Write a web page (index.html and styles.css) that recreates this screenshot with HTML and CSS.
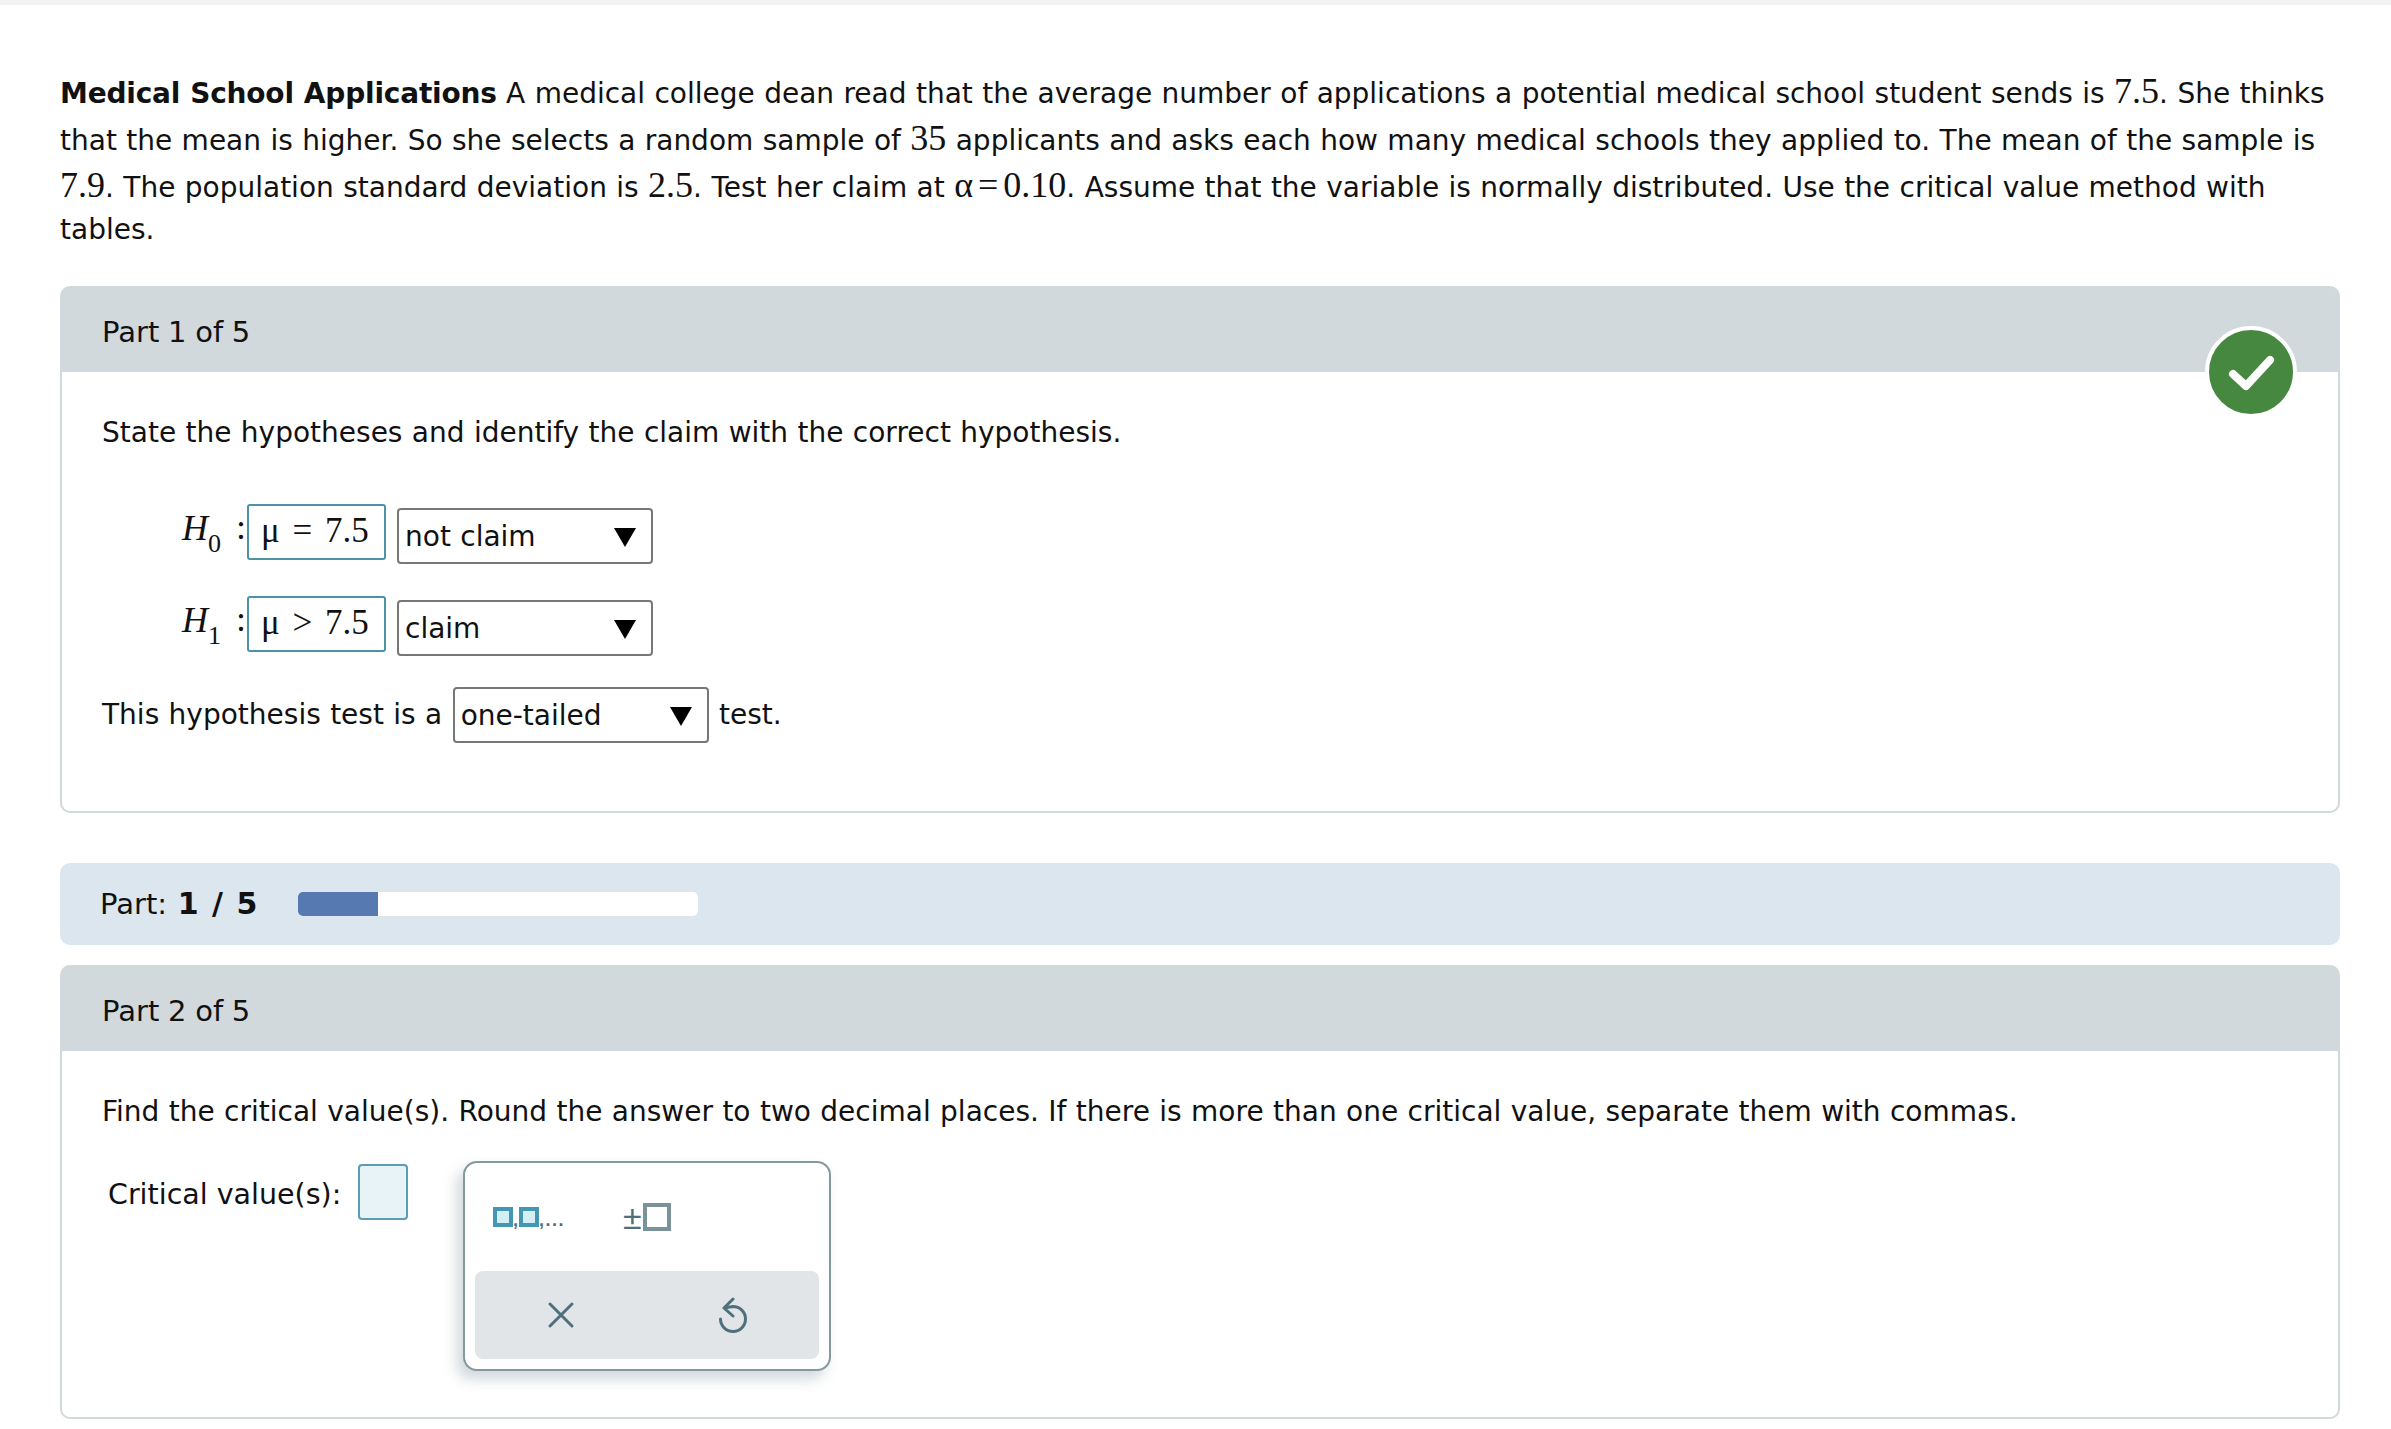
FILE: index.html
```html
<!DOCTYPE html>
<html lang="en">

<head>
    <meta charset="UTF-8">
    <title>Medical School Applications</title>
    <link rel="stylesheet" href="styles.css">
</head>

<body>
    <div class="topbar"></div>
    <main>
        <p class="question"><b>Medical School Applications</b> A medical college dean read that the average number of applications a potential medical school student sends is <span class="num">7.5</span>. She thinks that the mean is higher. So she selects a random sample of <span class="num">35</span> applicants and asks each how many medical schools they applied to. The mean of the sample is <span class="num">7.9</span>. The population standard deviation is <span class="num">2.5</span>. Test her claim at <span class="num">α<span class="eq">=</span>0.10</span>. Assume that the variable is normally distributed. Use the critical value method with tables.</p>

        <section class="part part-first">
            <div class="part-head">Part 1 of 5</div>
            <div class="badge">
                <svg viewBox="0 0 92 92" width="92" height="92">
                    <circle cx="46" cy="46" r="44" fill="#478840" stroke="#fff" stroke-width="4"/>
                    <path d="M28 48 L41 60 L65 34" fill="none" stroke="#fff" stroke-width="8" stroke-linecap="round" stroke-linejoin="round"/>
                </svg>
            </div>
            <div class="part-body">
                <p class="prompt">State the hypotheses and identify the claim with the correct hypothesis.</p>
                <div class="hyp">
                    <span class="hyp-name"><i>H</i><sub>0</sub></span>
                    <span class="colon">:</span>
                    <span class="answer">μ = 7.5</span>
                    <span class="select">not claim<span class="arrow"></span></span>
                </div>
                <div class="hyp">
                    <span class="hyp-name"><i>H</i><sub>1</sub></span>
                    <span class="colon">:</span>
                    <span class="answer">μ &gt; 7.5</span>
                    <span class="select">claim<span class="arrow"></span></span>
                </div>
                <div class="tail">
                    This hypothesis test is a
                    <span class="select">one-tailed<span class="arrow"></span></span>
                    test.
                </div>
            </div>
        </section>

        <div class="progress">
            <span class="progress-label">Part: <b>1 / 5</b></span>
            <div class="bar"><div class="bar-fill"></div></div>
        </div>

        <section class="part">
            <div class="part-head">Part 2 of 5</div>
            <div class="part-body">
                <p class="prompt">Find the critical value(s). Round the answer to two decimal places. If there is more than one critical value, separate them with commas.</p>
                <div class="critical">
                    <span class="critical-label">Critical value(s):</span>
                    <span class="blank"></span>
                    <div class="keypad">
                        <div class="keys">
                            <span class="key-list"><span class="sq"></span><span class="sep">,</span><span class="sq"></span><span class="sep">,...</span></span>
                            <span class="key-sign"><span class="pm">±</span><span class="sq-big"></span></span>
                        </div>
                        <div class="actions">
                            <svg viewBox="0 0 28 28" width="28" height="28">
                                <path d="M3 3 L25 25 M25 3 L3 25" fill="none" stroke="#4f6f7c" stroke-width="3" stroke-linecap="round"/>
                            </svg>
                            <svg viewBox="0 0 30 36" width="30" height="36">
                                <path d="M6 11 L15 9.5 A12.5 12.5 0 1 1 2.5 22 M15 2 L6 11 L15 19" fill="none" stroke="#4f6f7c" stroke-width="3" stroke-linecap="round" stroke-linejoin="round"/>
                            </svg>
                        </div>
                    </div>
                </div>
            </div>
        </section>
    </main>
</body>

</html>
```
FILE: styles.css
```css
* {
    box-sizing: border-box;
    margin: 0;
    padding: 0;
}

body {
    font-family: "DejaVu Sans", Verdana, sans-serif;
    font-size: 28px;
    word-spacing: 0.5px;
    color: #111;
    background: #fff;
}

.topbar {
    height: 5px;
    background: #f0f2f4;
}

main {
    padding: 0 51px 0 60px;
}

.question {
    margin-top: 63px;
    line-height: 42px;
}

.question b {
    letter-spacing: -0.2px;
}

.num {
    font-family: "Liberation Serif", serif;
    font-size: 36px;
    line-height: 47px;
}

.eq {
    margin: 0 5px;
}

.part {
    position: relative;
    border: 2px solid #d2d9dc;
    border-radius: 10px;
}

.part-first {
    margin-top: 35px;
    height: 527px;
}

.part-head {
    height: 85px;
    margin: -1px -1px 0;
    padding: 24px 0 0 41px;
    font-size: 29px;
    word-spacing: -0.5px;
    line-height: 42px;
    background: #d2d9dc;
    border-radius: 10px 10px 0 0;
}

.badge {
    position: absolute;
    top: 38px;
    right: 41px;
    width: 92px;
    height: 92px;
}

.part-body {
    padding: 40px 0 0 40px;
}

.prompt {
    line-height: 42px;
}

.hyp {
    display: flex;
    align-items: flex-start;
    margin-left: 79px;
    height: 92px;
}

.prompt + .hyp {
    margin-top: 50px;
}

.hyp-name {
    width: 54px;
    margin-left: 1px;
    font-family: "Liberation Serif", serif;
    font-size: 36px;
    line-height: 48px;
}

.hyp-name sub {
    font-size: 26px;
    line-height: 0;
    vertical-align: -12px;
}

.colon {
    width: 11px;
    font-family: "Liberation Serif", serif;
    font-size: 36px;
    line-height: 46px;
}

.answer {
    width: 139px;
    height: 56px;
    padding-left: 12px;
    border: 2px solid #4c93a8;
    border-radius: 3px;
    font-family: "Liberation Serif", serif;
    font-size: 35px;
    word-spacing: 4px;
    line-height: 50px;
}

.select {
    position: relative;
    display: inline-block;
    width: 256px;
    height: 56px;
    margin: 4px 0 0 11px;
    padding-left: 6px;
    border: 2px solid #777;
    border-radius: 4px;
    line-height: 54px;
    vertical-align: top;
}

.arrow {
    position: absolute;
    top: 18px;
    right: 15px;
    border-left: 11px solid transparent;
    border-right: 11px solid transparent;
    border-top: 19px solid #000;
}

.tail {
    line-height: 56px;
    margin-top: -1px;
    height: 60px;
}

.tail .select {
    margin: 0 1px 0 1px;
}

.progress {
    display: flex;
    align-items: center;
    height: 82px;
    margin-top: 50px;
    padding-left: 40px;
    background: #dce6ef;
    border-radius: 10px;
}

.progress-label {
    width: 198px;
    font-size: 29px;
    word-spacing: 1.5px;
    line-height: 42px;
}

.progress-label b {
    font-size: 30px;
    word-spacing: 3px;
}

.bar {
    width: 400px;
    height: 24px;
    background: #fff;
    border-radius: 5px;
    overflow: hidden;
}

.bar-fill {
    width: 80px;
    height: 100%;
    background: #5579b0;
}

.progress + .part {
    margin-top: 20px;
    height: 454px;
}

.critical {
    display: flex;
    align-items: flex-start;
    margin-top: 28px;
    padding-left: 6px;
}

.critical-label {
    width: 250px;
    margin-top: 13px;
    font-size: 28.5px;
    word-spacing: 0;
    line-height: 42px;
}

.blank {
    width: 50px;
    height: 56px;
    margin-top: 3px;
    background: #e8f3f8;
    border: 2px solid #5b9db2;
    border-radius: 4px;
}

.keypad {
    width: 368px;
    height: 210px;
    margin-left: 55px;
    padding: 0 10px;
    background: #fff;
    border: 2px solid #83999f;
    border-radius: 14px;
    box-shadow: -6px 8px 14px rgba(70, 100, 110, 0.25);
}

.keys {
    display: flex;
    align-items: center;
    height: 108px;
    padding-left: 18px;
    color: #4f6f7c;
}

.key-list {
    display: flex;
    align-items: flex-end;
    width: 130px;
}

.sq {
    width: 20px;
    height: 20px;
    background: #d5eef4;
    border: 4px solid #4297b5;
}

.sep {
    width: 6px;
    font-family: "Liberation Sans", sans-serif;
    font-size: 18px;
    font-weight: bold;
    letter-spacing: 1.5px;
    line-height: 14px;
    white-space: nowrap;
}

.key-sign {
    display: flex;
    align-items: center;
}

.pm {
    font-family: "Liberation Sans", sans-serif;
    font-size: 34px;
    line-height: 28px;
}

.sq-big {
    width: 28px;
    height: 28px;
    margin-left: 1px;
    border: 4px solid #7b9299;
}

.actions {
    display: flex;
    align-items: center;
    justify-content: space-around;
    height: 88px;
    background: #e1e5e8;
    border-radius: 8px;
}
```
